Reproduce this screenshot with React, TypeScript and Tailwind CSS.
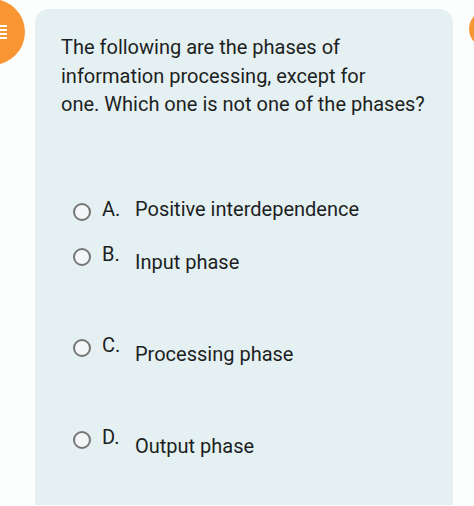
import React from "react";

const options = [
  { letter: "A.", text: "Positive interdependence", textMt: "mt-0", rowMt: "mt-[76px]" },
  { letter: "B.", text: "Input phase", textMt: "mt-[8px]", rowMt: "mt-[17px]" },
  { letter: "C.", text: "Processing phase", textMt: "mt-[9px]", rowMt: "mt-[55px]" },
  { letter: "D.", text: "Output phase", textMt: "mt-[9px]", rowMt: "mt-[55px]" },
];

export default function App() {
  return (
    <div
      className="relative w-[474px] h-[506px] overflow-hidden bg-[#fcfdfd]"
      style={{ fontFamily: "Roboto, 'Noto Sans', sans-serif" }}
    >
      {/* left orange bubble */}
      <div className="absolute left-[-41px] top-[-1px] w-[66px] h-[66px] rounded-full bg-[#f79633] flex items-center justify-end pr-[18px]">
        <div className="flex flex-col gap-[2px]">
          <div className="w-[8px] h-[2px] bg-white" />
          <div className="w-[8px] h-[2px] bg-white" />
          <div className="w-[8px] h-[2px] bg-white" />
          <div className="w-[8px] h-[2px] bg-white" />
        </div>
      </div>
      {/* right orange bubble */}
      <div className="absolute left-[469px] top-[10px] w-[40px] h-[38px] rounded-full bg-[#f79633]" />

      <div className="ml-[35px] mt-[9px] w-[418px] h-[496px] bg-[#e5f0f3] rounded-t-[14px] pt-[24px] pl-[26px] text-[#1c1f22]">
        <p className="text-[20px] leading-[28.5px] w-[385px]">
          The following are the phases of
          <br />
          information processing, except for
          <br />
          one. Which one is not one of the phases?
        </p>

        <div className="pl-[12px]">
          {options.map((o) => (
            <div key={o.letter} className={`flex items-start ${o.rowMt}`}>
              <div className="mt-[8px] w-[18px] h-[18px] rounded-full border-2 border-[#767676] bg-[#f4f6f7]" />
              <div className="ml-[11px] w-[33px] text-[20px] leading-[28px]">{o.letter}</div>
              <div className={`text-[20px] leading-[28px] ${o.textMt}`}>{o.text}</div>
            </div>
          ))}
        </div>
      </div>
    </div>
  );
}
